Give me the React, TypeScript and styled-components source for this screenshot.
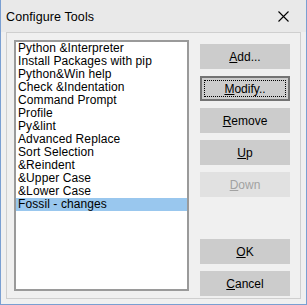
import React, { FC } from 'react';
import styled, { createGlobalStyle } from 'styled-components';

const GlobalStyle = createGlobalStyle`
  html, body {
    margin: 0;
    padding: 0;
    background: #f0f0f0;
  }
  * {
    box-sizing: border-box;
  }
`;

const StyledWindow = styled.div`
  width: 307px;
  height: 305px;
  display: flex;
  flex-direction: column;
  background: #f0f0f0;
  border: 1px solid #7a9fd2;
  border-top: none;
  font-family: "Liberation Sans", Arial, sans-serif;
  font-size: 12px;
  color: #000;
`;

const StyledTitleBar = styled.div`
  height: 32px;
  flex: none;
  display: flex;
  align-items: center;
  justify-content: space-between;
  padding-left: 5px;
  background: #e9e9e9;
`;

const StyledTitle = styled.div`
  padding-top: 1px;
  font-size: 12.5px;
  letter-spacing: 0.1px;
`;

const StyledClose = styled.div`
  width: 46px;
  height: 32px;
  display: flex;
  align-items: center;
  justify-content: center;
`;

const StyledFrame = styled.div`
  flex: 1;
  display: flex;
  margin: 0 5px 5px 5px;
  padding: 7px 10px 2px 7px;
  border: 1px solid #cfcfcf;
`;

const StyledList = styled.div`
  width: 175px;
  height: 251px;
  flex: none;
  border: 2px solid #9a9a9a;
  background: #fff;
`;

const StyledItem = styled.div<{ $selected?: boolean }>`
  height: 13px;
  line-height: 13px;
  padding-left: 2px;
  white-space: nowrap;
  letter-spacing: 0.1px;
  background: ${(p) => (p.$selected ? '#99c7ee' : 'transparent')};
`;

const StyledButtons = styled.div`
  flex: 1;
  display: flex;
  flex-direction: column;
  align-items: flex-end;
  padding-top: 4px;
  gap: 7px;
`;

const StyledSpacer = styled.div`
  flex: 1;
`;

const StyledButton = styled.div<{ $focused?: boolean; $disabled?: boolean }>`
  width: 90px;
  height: 25px;
  flex: none;
  display: flex;
  align-items: center;
  justify-content: center;
  padding: 2px;
  background: ${(p) => (p.$disabled ? '#e1e1e1' : '#cccccc')};
  color: ${(p) => (p.$disabled ? '#a2a2a2' : '#000')};
  border: 2px solid ${(p) => (p.$focused ? '#737373' : 'transparent')};
`;

const StyledFocus = styled.div<{ $focused?: boolean }>`
  width: 100%;
  height: 100%;
  display: flex;
  align-items: center;
  justify-content: center;
  outline: ${(p) => (p.$focused ? '1px dotted #000' : 'none')};
  outline-offset: -1px;
`;

const StyledKey = styled.span`
  text-decoration: underline;
`;

const ITEMS = [
  'Python &Interpreter',
  'Install Packages with pip',
  'Python&Win help',
  'Check &Indentation',
  'Command Prompt',
  'Profile',
  'Py&lint',
  'Advanced Replace',
  'Sort Selection',
  '&Reindent',
  '&Upper Case',
  '&Lower Case',
  'Fossil - changes'
];

const SELECTED = 12;

type ButtonDef = { label: string; focused?: boolean; disabled?: boolean };

const TOP_BUTTONS: ButtonDef[] = [
  { label: 'Add...' },
  { label: 'Modify..', focused: true },
  { label: 'Remove' },
  { label: 'Up' },
  { label: 'Down', disabled: true }
];

const BOTTOM_BUTTONS: ButtonDef[] = [{ label: 'OK' }, { label: 'Cancel' }];

const DialogButton: FC<ButtonDef> = ({ label, focused, disabled }) => (
  <StyledButton $focused={focused} $disabled={disabled}>
    <StyledFocus $focused={focused}>
      <span>
        <StyledKey>{label[0]}</StyledKey>
        {label.slice(1)}
      </span>
    </StyledFocus>
  </StyledButton>
);

const App: FC = () => (
  <>
    <GlobalStyle />
    <StyledWindow>
      <StyledTitleBar>
        <StyledTitle>Configure Tools</StyledTitle>
        <StyledClose>
          <svg width="11" height="11" viewBox="0 0 11 11">
            <path d="M0.5 0.5 L10.5 10.5 M10.5 0.5 L0.5 10.5" stroke="#000" strokeWidth="1.1" fill="none" />
          </svg>
        </StyledClose>
      </StyledTitleBar>
      <StyledFrame>
        <StyledList>
          {ITEMS.map((item, i) => (
            <StyledItem key={item} $selected={i === SELECTED}>
              {item}
            </StyledItem>
          ))}
        </StyledList>
        <StyledButtons>
          {TOP_BUTTONS.map((b) => (
            <DialogButton key={b.label} {...b} />
          ))}
          <StyledSpacer />
          {BOTTOM_BUTTONS.map((b) => (
            <DialogButton key={b.label} {...b} />
          ))}
        </StyledButtons>
      </StyledFrame>
    </StyledWindow>
  </>
);

export default App;
